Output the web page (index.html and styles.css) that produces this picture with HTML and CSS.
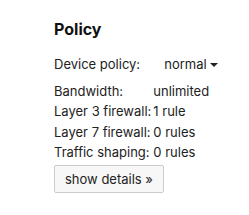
FILE: index.html
```html
<!DOCTYPE html>
<html>
<head>
<meta charset="utf-8">
<link rel="stylesheet" href="styles.css">
</head>
<body>
<div class="panel">
  <h2 class="title">Policy</h2>
  <table class="info">
    <tr class="first">
      <td class="label">Device policy:</td>
      <td class="value"><span class="dropdown">normal <span class="caret"></span></span></td>
    </tr>
    <tr><td class="label">Bandwidth:</td><td class="value">unlimited</td></tr>
    <tr><td class="label">Layer 3 firewall:</td><td class="value">1 rule</td></tr>
    <tr><td class="label">Layer 7 firewall:</td><td class="value">0 rules</td></tr>
    <tr><td class="label">Traffic shaping:</td><td class="value">0 rules</td></tr>
  </table>
  <button class="details">show details »</button>
</div>
</body>
</html>
```
FILE: styles.css
```css
html, body {
  margin: 0;
  padding: 0;
  background: #fff;
}
body {
  font-family: Inter, "Noto Sans", sans-serif;
  color: #222;
  font-size: 13px;
}
.panel {
  padding: 19px 0 0 54px;
}
.title {
  margin: 0 0 15px 0;
  font-size: 16px;
  font-weight: 700;
  line-height: 20px;
  color: #111;
}
.info {
  border-collapse: collapse;
}
.info td {
  padding: 0;
  line-height: 20.5px;
  white-space: nowrap;
}
.info tr.first td {
  padding-bottom: 6px;
}
.info td.label {
  padding-right: 2px;
}
.dropdown {
  margin-left: 11px;
  color: #222;
}
.caret {
  display: inline-block;
  width: 0;
  height: 0;
  border-left: 4px solid transparent;
  border-right: 4px solid transparent;
  border-top: 4px solid #222;
  vertical-align: middle;
}
.details {
  display: block;
  margin-top: 2px;
  height: 28px;
  padding: 0 10px;
  font-family: Inter, "Noto Sans", sans-serif;
  font-size: 13px;
  color: #222;
  background: #f7f7f7;
  border: 1px solid #ccc;
  border-radius: 2px;
}
```
